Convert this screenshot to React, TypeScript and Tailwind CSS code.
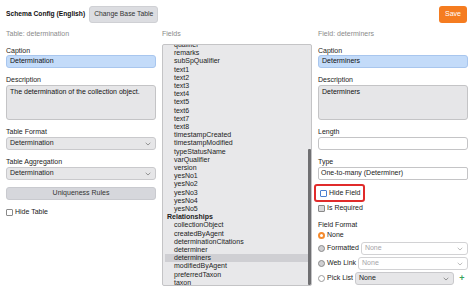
import React from 'react';

const font = { fontFamily: '"Liberation Sans", Arial, sans-serif' };

const Chevron: React.FC<{ light?: boolean }> = ({ light }) => (
  <svg width="6" height="4" viewBox="0 0 6 4" className="shrink-0">
    <path d="M0.7 0.8 L3 3 L5.3 0.8" fill="none" stroke={light ? '#b5b5b5' : '#8a8a8a'} strokeWidth="0.9" />
  </svg>
);

const Label: React.FC<{ children: React.ReactNode }> = ({ children }) => (
  <div className="h-[10px] leading-[10px] text-[7px] text-[#222]">{children}</div>
);

const Select: React.FC<{ value: string; className?: string }> = ({ value, className = '' }) => (
  <div className={`h-[13px] flex items-center justify-between pl-[3px] pr-[4px] rounded-[3px] border border-[#c9c9cc] bg-[#e6e6e8] text-[7px] text-[#222] ${className}`}>
    <span>{value}</span>
    <Chevron />
  </div>
);

const fields = [
  'remarks', 'subSpQualifier', 'text1', 'text2', 'text3', 'text4', 'text5', 'text6', 'text7', 'text8',
  'timestampCreated', 'timestampModified', 'typeStatusName', 'varQualifier', 'version',
  'yesNo1', 'yesNo2', 'yesNo3', 'yesNo4', 'yesNo5',
];
const relationships = [
  'collectionObject', 'createdByAgent', 'determinationCitations', 'determiner', 'determiners',
  'modifiedByAgent', 'preferredTaxon', 'taxon',
];

export default function App() {
  return (
    <div className="w-[474px] h-[293px] bg-white overflow-hidden px-[6px]" style={font}>
      {/* header */}
      <div className="h-[28px] flex items-center justify-between pt-[1px]">
        <div className="flex items-center gap-[4px]">
          <span className="text-[6.7px] font-bold text-[#111]">Schema Config (English)</span>
          <button className="h-[17px] px-[4px] rounded-[3px] bg-[#dcdde1] border border-[#cfd0d4] text-[6.8px] text-[#333]">
            Change Base Table
          </button>
        </div>
        <button className="h-[17px] w-[28px] mr-[1px] rounded-[3px] bg-[#f57c20] text-[7px] text-white">Save</button>
      </div>

      <div className="grid grid-cols-[150px_150px_150px] gap-[6px]">
        {/* left */}
        <div className="flex flex-col gap-[7px]">
          <div className="h-[11px] leading-[11px] text-[7px] text-[#8a8a8a]">Table: determination</div>
          <div className="flex flex-col">
            <Label>Caption</Label>
            <div className="h-[13px] -mt-[1px] flex items-center px-[3px] rounded-[3px] border border-[#a8c6ee] bg-[#c3dbf9] text-[7px] text-[#111]">Determination</div>
          </div>
          <div className="flex flex-col">
            <Label>Description</Label>
            <div className="h-[35px] px-[3px] pt-[1px] rounded-[3px] border border-[#c4c4c6] bg-[#e6e6e8] text-[7px] text-[#111] leading-[10px]">
              The determination of the collection object.
            </div>
          </div>
          <div className="flex flex-col">
            <Label>Table Format</Label>
            <Select value="Determination" />
          </div>
          <div className="flex flex-col">
            <Label>Table Aggregation</Label>
            <Select value="Determination" />
          </div>
          <button className="h-[13px] rounded-[3px] bg-[#d6d7dc] border border-[#c9cacf] text-[7px] text-[#333]">Uniqueness Rules</button>
          <div className="flex items-center gap-[2px] h-[10px]">
            <span className="w-[7px] h-[7px] border border-[#8a8a8a] rounded-[1px] bg-white" />
            <span className="text-[7px] text-[#222]">Hide Table</span>
          </div>
        </div>

        {/* middle */}
        <div className="flex flex-col">
          <div className="h-[11px] leading-[11px] text-[7px] text-[#8a8a8a] mb-[5px]">Fields</div>
          <div className="h-[242px] rounded-[2px] border border-[#c4c4c6] bg-[#e8e8ea] flex overflow-hidden">
            <div className="flex-1 overflow-hidden">
              <div className="-mt-[4px] pl-[2px] text-[7px] text-[#222] leading-[8.2px]">
                <div className="pl-[9px]">qualifier</div>
                {fields.map((f) => (
                  <div key={f} className="pl-[9px]">{f}</div>
                ))}
                <div className="pl-[2px] font-bold">Relationships</div>
                {relationships.map((f) => (
                  <div key={f} className={`pl-[9px] ${f === 'determiners' ? 'bg-[#cfcfd3]' : ''}`}>{f}</div>
                ))}
              </div>
            </div>
            <div className="w-[3px] flex flex-col">
              <div className="mt-[104px] flex-1 bg-[#6f6f72] rounded-[1px]" />
            </div>
          </div>
        </div>

        {/* right */}
        <div className="flex flex-col gap-[7px]">
          <div className="h-[11px] leading-[11px] text-[7px] text-[#8a8a8a]">Field: determiners</div>
          <div className="flex flex-col">
            <Label>Caption</Label>
            <div className="h-[13px] -mt-[1px] flex items-center px-[3px] rounded-[3px] border border-[#a8c6ee] bg-[#c3dbf9] text-[7px] text-[#111]">Determiners</div>
          </div>
          <div className="flex flex-col">
            <Label>Description</Label>
            <div className="h-[35px] px-[3px] pt-[1px] rounded-[3px] border border-[#c4c4c6] bg-[#e6e6e8] text-[7px] text-[#111] leading-[10px]">
              Determiners
            </div>
          </div>
          <div className="flex flex-col">
            <Label>Length</Label>
            <div className="h-[13px] rounded-[3px] border border-[#c4c4c6] bg-white" />
          </div>
          <div className="flex flex-col">
            <Label>Type</Label>
            <div className="h-[13px] flex items-center px-[2px] rounded-[2px] border border-[#c4c4c6] bg-white text-[7px] text-[#222]">One-to-many (Determiner)</div>
          </div>
          <div className="flex flex-col gap-[1px] -mt-[3px]">
            <div className="flex items-center gap-[2px] h-[18px] w-[51px] -ml-[4px] pl-[4px] border-2 border-[#e02b2b] rounded-[3px]">
              <span className="w-[7px] h-[7px] border border-[#4a7fd0] rounded-[1px] bg-white" />
              <span className="text-[7px] text-[#222]">Hide Field</span>
            </div>
            <div className="flex items-center gap-[2px] h-[11px]">
              <span className="w-[7px] h-[7px] border border-[#8a8a8a] rounded-[1px] bg-[#d8d8da]" />
              <span className="text-[7px] text-[#222]">Is Required</span>
            </div>
          </div>
          <div className="flex flex-col -mt-[1px]">
            <Label>Field Format</Label>
            <div className="flex items-center gap-[2px] h-[10px]">
              <span className="w-[7px] h-[7px] rounded-full border-2 border-[#f58a2c] bg-white" />
              <span className="text-[7px] text-[#222]">None</span>
            </div>
            <div className="flex items-center gap-[2px] h-[13px] mt-[2px]">
              <span className="w-[7px] h-[7px] rounded-full border border-[#8a8a8a] bg-[#cfcfd2]" />
              <span className="text-[7px] text-[#222]">Formatted</span>
              <div className="flex-1 h-[13px] flex items-center justify-between pl-[3px] pr-[4px] rounded-[3px] border border-[#d2d2d4] bg-white text-[7px] text-[#a5a5a8]">
                <span>None</span>
                <Chevron light />
              </div>
            </div>
            <div className="flex items-center gap-[2px] h-[13px] mt-[2px]">
              <span className="w-[7px] h-[7px] rounded-full border border-[#8a8a8a] bg-[#cfcfd2]" />
              <span className="text-[7px] text-[#222]">Web Link</span>
              <div className="flex-1 h-[13px] flex items-center justify-between pl-[3px] pr-[4px] rounded-[3px] border border-[#d2d2d4] bg-white text-[7px] text-[#a5a5a8]">
                <span>None</span>
                <Chevron light />
              </div>
            </div>
            <div className="flex items-center gap-[2px] h-[13px] mt-[2px]">
              <span className="w-[7px] h-[7px] rounded-full border border-[#9a9a9a] bg-white" />
              <span className="text-[7px] text-[#222]">Pick List</span>
              <Select value="None" className="flex-1" />
              <span className="w-[12px] text-center text-[9px] font-bold text-[#3aa35a] leading-none">+</span>
            </div>
          </div>
        </div>
      </div>
    </div>
  );
}
